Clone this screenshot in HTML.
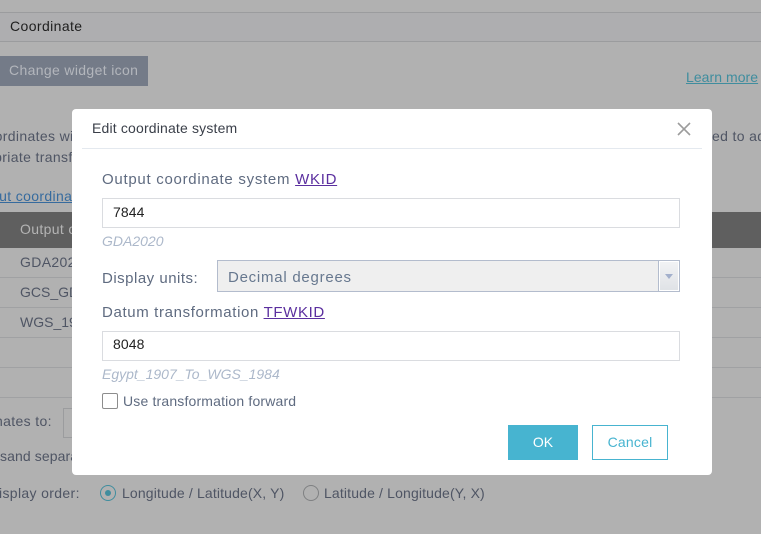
<!DOCTYPE html>
<html>
<head>
<meta charset="utf-8">
<style>
html,body{margin:0;padding:0;width:761px;height:534px;overflow:hidden;background:#b1b1b1;font-family:"Liberation Sans",sans-serif;}
.t{position:absolute;white-space:nowrap;line-height:20px;height:20px;}
.b{position:absolute;box-sizing:border-box;}
.g{color:#4f5564;font-size:14px;letter-spacing:.35px;}
.line{position:absolute;left:0;width:761px;height:1px;background:#a0a1a3;}
.d{color:#5f6b80;font-size:15px;letter-spacing:.72px;}
.in{position:absolute;box-sizing:border-box;left:30px;width:578px;height:30px;border:1px solid #dadce0;background:#fff;}
.it{color:#acb8ca;font-style:italic;font-size:14px;}
a{color:#5b2f9f;text-decoration:underline;}
</style>
</head>
<body>
<div class="b" style="left:0;top:12px;width:761px;height:30px;background:#aeaeb0;border-top:1px solid #9b9c9e;border-bottom:1px solid #9b9c9e;"></div>
<div class="t" style="left:10px;top:16px;font-size:14px;color:#1e1e1e;letter-spacing:.4px;">Coordinate</div>
<div class="b" style="left:0;top:56px;width:148px;height:30px;background:#747b88;"></div>
<div class="t" style="left:9px;top:60px;font-size:14px;color:#b3b6bc;letter-spacing:.35px;">Change widget icon</div>
<div class="t" style="left:686px;top:67px;font-size:14px;color:#3f8d9e;letter-spacing:.05px;text-decoration:underline;">Learn more</div>
<div class="t g" style="left:-24px;top:126px;">Coordinates wi</div>
<div class="t g" style="left:712px;top:126px;">ed to add</div>
<div class="t g" style="left:-14px;top:147px;">opriate transf</div>
<div class="t" style="left:-9px;top:186px;font-size:14px;letter-spacing:.35px;color:#366b9e;text-decoration:underline;">put coordinate</div>
<div class="b" style="left:0;top:212px;width:761px;height:36px;background:#5f5f5f;"></div>
<div class="t" style="left:20px;top:219px;font-size:14px;letter-spacing:.35px;color:#b4b4b4;">Output coordinate</div>
<div class="t g" style="left:20px;top:252px;">GDA2020</div>
<div class="t g" style="left:20px;top:282px;letter-spacing:0;">GCS_GDA</div>
<div class="t g" style="left:20px;top:312px;letter-spacing:0;">WGS_1984</div>
<div class="line" style="top:277px"></div>
<div class="line" style="top:307px"></div>
<div class="line" style="top:337px"></div>
<div class="line" style="top:367px"></div>
<div class="line" style="top:397px"></div>
<div class="t g" style="left:-5px;top:411px;">nates to:</div>
<div class="b" style="left:63px;top:408px;width:40px;height:30px;border:1px solid #9b9c9e;"></div>
<div class="t g" style="left:0;top:446px;letter-spacing:.1px;">sand separator</div>
<div class="t g" style="left:-1px;top:483px;">isplay order:</div>
<div class="b" style="left:100px;top:485px;width:16px;height:16px;border:1px solid #3f8d9e;border-radius:50%;"></div>
<div class="b" style="left:105px;top:490px;width:6px;height:6px;background:#3f8d9e;border-radius:50%;"></div>
<div class="t g" style="left:122px;top:483px;letter-spacing:.15px;">Longitude / Latitude(X, Y)</div>
<div class="b" style="left:303px;top:485px;width:16px;height:16px;border:1px solid #7f8082;border-radius:50%;"></div>
<div class="t g" style="left:324px;top:483px;letter-spacing:.15px;">Latitude / Longitude(Y, X)</div>

<div class="b" style="left:72px;top:109px;width:640px;height:366px;background:#fff;border-radius:4px;">
  <div class="t" style="left:20px;top:9px;font-size:14px;color:#3a3f49;letter-spacing:.17px;">Edit coordinate system</div>
  <div class="b" style="left:10px;top:39px;width:620px;height:1px;background:#e4e9ef;"></div>
  <svg style="position:absolute;left:605px;top:13px" width="14" height="14" viewBox="0 0 14 14"><path d="M1 1L13 13M13 1L1 13" stroke="#9c9c9c" stroke-width="1.6" fill="none"/></svg>

  <div class="t d" style="left:30px;top:61px;">Output coordinate system <a>WKID</a></div>
  <div class="in" style="top:89px;"></div>
  <div class="t" style="left:41px;top:93px;font-size:14px;color:#222;letter-spacing:.1px;">7844</div>
  <div class="t it" style="left:30px;top:122px;">GDA2020</div>

  <div class="t d" style="left:30px;top:160px;letter-spacing:.5px;">Display units:</div>
  <div class="b" style="left:145px;top:151px;width:463px;height:32px;background:#efefef;border:1px solid #b3bccd;"></div>
  <div class="t" style="left:156px;top:159px;font-size:15px;color:#67788f;letter-spacing:.75px;">Decimal degrees</div>
  <div class="b" style="left:586px;top:152px;width:21px;height:30px;border-left:1px solid #b3bccd;background:linear-gradient(#f2f3f5,#dfe2e6);box-shadow:inset 1px 1px 0 #fff,inset -1px -1px 0 #fff;"></div>
  <svg style="position:absolute;left:592px;top:165px" width="10" height="6" viewBox="0 0 10 6"><path d="M1 0H9L5 5Z" fill="#a3b0cc"/></svg>

  <div class="t d" style="left:30px;top:194px;letter-spacing:.64px;">Datum transformation <a>TFWKID</a></div>
  <div class="in" style="top:222px;"></div>
  <div class="t" style="left:41px;top:225px;font-size:14px;color:#222;letter-spacing:.1px;">8048</div>
  <div class="t it" style="left:30px;top:255px;">Egypt_1907_To_WGS_1984</div>

  <div class="b" style="left:30px;top:284px;width:16px;height:16px;border:1px solid #8d8d8d;border-radius:2px;"></div>
  <div class="t" style="left:51px;top:282px;font-size:14px;color:#5f6b80;letter-spacing:.17px;">Use transformation forward</div>

  <div class="b" style="left:436px;top:316px;width:70px;height:35px;background:#47b4d0;color:#fff;font-size:14px;text-align:center;line-height:34px;">OK</div>
  <div class="b" style="left:520px;top:316px;width:76px;height:35px;border:1px solid #47b4d0;color:#47b4d0;font-size:14px;text-align:center;line-height:33px;letter-spacing:.2px;">Cancel</div>
</div>
</body>
</html>
